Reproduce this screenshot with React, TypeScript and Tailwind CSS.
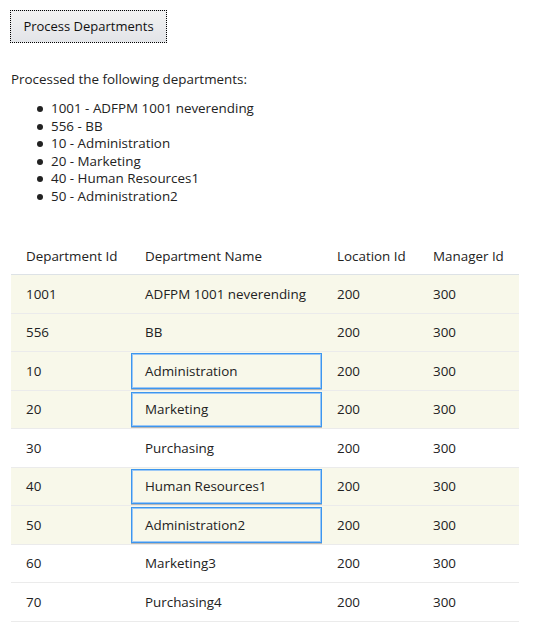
import React from 'react'

const processed = [
  '1001 - ADFPM 1001 neverending',
  '556 - BB',
  '10 - Administration',
  '20 - Marketing',
  '40 - Human Resources1',
  '50 - Administration2',
]

type Row = { id: string; name: string; processed: boolean; editing: boolean }

const rows: Row[] = [
  { id: '1001', name: 'ADFPM 1001 neverending', processed: true, editing: false },
  { id: '556', name: 'BB', processed: true, editing: false },
  { id: '10', name: 'Administration', processed: true, editing: true },
  { id: '20', name: 'Marketing', processed: true, editing: true },
  { id: '30', name: 'Purchasing', processed: false, editing: false },
  { id: '40', name: 'Human Resources1', processed: true, editing: true },
  { id: '50', name: 'Administration2', processed: true, editing: true },
  { id: '60', name: 'Marketing3', processed: false, editing: false },
  { id: '70', name: 'Purchasing4', processed: false, editing: false },
]

export default function App() {
  return (
    <div className="min-h-[635px] bg-white text-[13.4px] text-[#222] font-['Open_Sans',sans-serif]">
      <div className="px-[10px] pt-[10px]">
        <button className="h-[33px] w-[157px] border border-dotted border-black bg-gradient-to-b from-[#f2f2f2] to-[#e2e4e8] text-[13px] text-[#111]">
          Process Departments
        </button>

        <p className="mt-[26px] pl-[1px]">Processed the following departments:</p>

        <ul className="mt-[11px] pl-[27px] leading-[17.6px]">
          {processed.map((p) => (
            <li key={p} className="flex items-center">
              <span className="mr-[8px] inline-block h-[6px] w-[6px] rounded-full bg-[#222]" />
              {p}
            </li>
          ))}
        </ul>

        <table className="mt-[33px] ml-[1px] w-[508px] border-collapse">
          <thead>
            <tr className="border-b border-[#dde2e6]">
              <th className="w-[119px] h-[36px] pl-[15px] text-left font-normal">Department Id</th>
              <th className="w-[192px] pl-[15px] text-left font-normal">Department Name</th>
              <th className="w-[96px] pl-[15px] text-left font-normal">Location Id</th>
              <th className="pl-[15px] text-left font-normal">Manager Id</th>
            </tr>
          </thead>
          <tbody>
            {rows.map((r) => (
              <tr
                key={r.id}
                className={`h-[38.5px] border-b border-[#ebebeb] ${r.processed ? 'bg-[#f8f8ea]' : 'bg-white'}`}
              >
                <td className="pl-[15px]">{r.id}</td>
                <td className="relative pl-[15px]">
                  {r.editing ? (
                    <div className="absolute left-[1px] right-0 top-[1px] bottom-[1px] flex items-center border border-[#3d96ee] pl-[13px] shadow-[inset_0_0_0_1px_#9cc8f5,0_1px_0_#b8b8b8]">
                      {r.name}
                    </div>
                  ) : (
                    r.name
                  )}
                </td>
                <td className="pl-[15px]">200</td>
                <td className="pl-[15px]">300</td>
              </tr>
            ))}
          </tbody>
        </table>
      </div>
    </div>
  )
}
